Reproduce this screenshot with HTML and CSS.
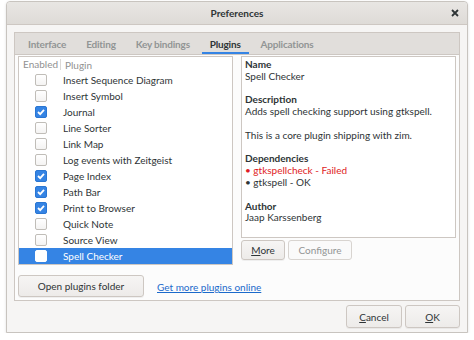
FILE: index.html
```html
<!DOCTYPE html>
<html lang="en"><head>
<meta charset="utf-8">
<title>Preferences</title>
<link rel="stylesheet" href="styles.css">
</head><body>
<div class="window">
<div class="titlebar">
<span class="title">Preferences</span>
<svg class="close" width="8" height="8" viewBox="0 0 8 8"><path d="M1,1 L7,7 M7,1 L1,7" stroke="#2e3436" stroke-width="1.8"/></svg>
</div>
<div class="content">
<div class="notebook">
<div class="tabs">
<span class="tab">Interface</span>
<span class="tab">Editing</span>
<span class="tab">Key bindings</span>
<span class="tab active">Plugins</span>
<span class="tab">Applications</span>
</div>
<div class="page">
<div class="panes">
<div class="list">
<div class="list-head"><span class="col-enabled">Enabled</span><span class="col-plugin">Plugin</span></div>
<div class="row"><span class="cell-check"><span class="check"></span></span><span>Insert Sequence Diagram</span></div>
<div class="row"><span class="cell-check"><span class="check"></span></span><span>Insert Symbol</span></div>
<div class="row"><span class="cell-check"><span class="check on"><svg width="10" height="10" viewBox="0 0 10 10"><path d="M2,5 L4.2,7.2 L8,2.8" fill="none" stroke="#fff" stroke-width="1.8"/></svg></span></span><span>Journal</span></div>
<div class="row"><span class="cell-check"><span class="check"></span></span><span>Line Sorter</span></div>
<div class="row"><span class="cell-check"><span class="check"></span></span><span>Link Map</span></div>
<div class="row"><span class="cell-check"><span class="check"></span></span><span>Log events with Zeitgeist</span></div>
<div class="row"><span class="cell-check"><span class="check on"><svg width="10" height="10" viewBox="0 0 10 10"><path d="M2,5 L4.2,7.2 L8,2.8" fill="none" stroke="#fff" stroke-width="1.8"/></svg></span></span><span>Page Index</span></div>
<div class="row"><span class="cell-check"><span class="check on"><svg width="10" height="10" viewBox="0 0 10 10"><path d="M2,5 L4.2,7.2 L8,2.8" fill="none" stroke="#fff" stroke-width="1.8"/></svg></span></span><span>Path Bar</span></div>
<div class="row"><span class="cell-check"><span class="check on"><svg width="10" height="10" viewBox="0 0 10 10"><path d="M2,5 L4.2,7.2 L8,2.8" fill="none" stroke="#fff" stroke-width="1.8"/></svg></span></span><span>Print to Browser</span></div>
<div class="row"><span class="cell-check"><span class="check"></span></span><span>Quick Note</span></div>
<div class="row"><span class="cell-check"><span class="check"></span></span><span>Source View</span></div>
<div class="row selected"><span class="cell-check"><span class="check"></span></span><span>Spell Checker</span></div>
</div>
<div class="side">
<div class="info">
<div class="label">Name</div>
<div>Spell Checker</div>
<div class="gap"></div>
<div class="label">Description</div>
<div>Adds spell checking support using gtkspell.</div>
<div class="gap"></div>
<div>This is a core plugin shipping with zim.</div>
<div class="gap"></div>
<div class="label">Dependencies</div>
<div class="failed">• gtkspellcheck - Failed</div>
<div>• gtkspell - OK</div>
<div class="gap"></div>
<div class="label">Author</div>
<div>Jaap Karssenberg</div>
</div>
<div class="side-buttons">
<span class="button more"><u>M</u>ore</span>
<span class="button configure disabled">Configure</span>
</div>
</div>
</div>
<div class="page-bottom">
<span class="button open-folder">Open plugins folder</span>
<a class="link" href="#">Get more plugins online</a>
</div>
</div>
</div>
<div class="actions">
<span class="button cancel"><u>C</u>ancel</span>
<span class="button ok"><u>O</u>K</span>
</div>
</div>
</div>
</body></html>
```
FILE: styles.css
```css
body {
	margin: 0;
	background: #ffffff;
	font-family: "Lato", "Noto Sans", sans-serif;
	font-size: 10px;
	color: #2e3436;
}

.window {
	margin: 1px 6px 0 6px;
	width: 460px;
	height: 330px;
	border: 1px solid #c8c4bf;
	border-radius: 4px 4px 0 0;
	background: #f6f5f4;
	display: flex;
	flex-direction: column;
	box-shadow: 0 1px 3px rgba(0, 0, 0, 0.12);
}

.titlebar {
	height: 22px;
	flex: none;
	background: linear-gradient(#e8e6e3, #dedbd7);
	border-bottom: 1px solid #cdc7c2;
	border-radius: 4px 4px 0 0;
	display: flex;
	align-items: center;
	justify-content: center;
	position: relative;
}

.title {
	font-weight: bold;
	font-size: 10px;
}

.close {
	position: absolute;
	right: 8px;
	top: 7px;
}

.content {
	flex: 1;
	display: flex;
	flex-direction: column;
	padding: 7px 7px 5px 7px;
}

.notebook {
	border: 1px solid #cdc7c2;
	height: 267px;
	display: flex;
	flex-direction: column;
}

.tabs {
	height: 24px;
	background: #e1dedb;
	border-bottom: 1px solid #cdc7c2;
	display: flex;
	padding-left: 3px;
}

.tab {
	margin: 0 2px;
	padding: 2px 8px 0 8px;
	display: flex;
	align-items: center;
	color: #929595;
	font-weight: bold;
	letter-spacing: -0.2px;
	border-bottom: 2px solid transparent;
}

.tab.active {
	color: #2e3436;
	border-bottom-color: #3584e4;
}

.page {
	flex: 1;
	background: #fcfcfc;
	padding: 1px 3px 3px 3px;
	display: flex;
	flex-direction: column;
}

.panes {
	display: flex;
	gap: 8px;
}

.list {
	width: 213px;
	border: 1px solid #cdc7c2;
	background: #ffffff;
}

.list-head {
	height: 15px;
	display: flex;
	align-items: center;
	color: #919191;
}

.col-enabled {
	width: 42px;
	padding-left: 4px;
	box-sizing: border-box;
	border-right: 1px solid #dcd9d6;
	line-height: 11px;
}

.col-plugin {
	padding-left: 4px;
}

.row {
	height: 16px;
	display: flex;
	align-items: center;
}

.cell-check {
	width: 44px;
	display: flex;
	justify-content: center;
}

.check {
	width: 10px;
	height: 10px;
	border: 1px solid #c0bdb8;
	border-radius: 2px;
	background: linear-gradient(#ffffff, #f4f3f2);
	display: flex;
	align-items: center;
	justify-content: center;
}

.check.on {
	background: #3584e4;
	border-color: #2a76d2;
}

.row.selected {
	background: #3584e4;
	color: #ffffff;
}

.row.selected .check {
	background: #ffffff;
	border-color: #ffffff;
}

.side {
	width: 215px;
	display: flex;
	flex-direction: column;
}

.info {
	height: 175px;
	border: 1px solid #cdc7c2;
	background: #ffffff;
	padding: 2px 3px 3px 3px;
	line-height: 11.8px;
}

.label {
	font-weight: bold;
}

.gap {
	height: 11.8px;
}

.failed {
	color: #e01b24;
}

.side-buttons {
	display: flex;
	gap: 3px;
	margin-top: 2px;
}

.button {
	display: flex;
	align-items: center;
	justify-content: center;
	box-sizing: border-box;
	border: 1px solid #cdc7c2;
	border-radius: 3px;
	background: linear-gradient(#f6f5f4, #edebe9);
	box-shadow: 0 1px 0 rgba(0, 0, 0, 0.05);
	color: #2e3436;
}

.more {
	width: 44px;
	height: 20px;
}

.configure {
	width: 64px;
	height: 20px;
}

.button.disabled {
	background: #fafafa;
	color: #929595;
	border-color: #d8d4d0;
	box-shadow: none;
}

.page-bottom {
	display: flex;
	align-items: center;
	margin-top: 10px;
}

.open-folder {
	width: 126px;
	height: 22px;
}

.link {
	margin-left: 13px;
	color: #1b6acb;
	margin-top: 2px;
}

.actions {
	display: flex;
	justify-content: flex-end;
	gap: 3px;
	margin-top: 4px;
}

.cancel {
	width: 56px;
	height: 23px;
}

.ok {
	width: 55px;
	height: 23px;
}

u {
	text-decoration-thickness: 1px;
	text-underline-offset: 1px;
}
```
